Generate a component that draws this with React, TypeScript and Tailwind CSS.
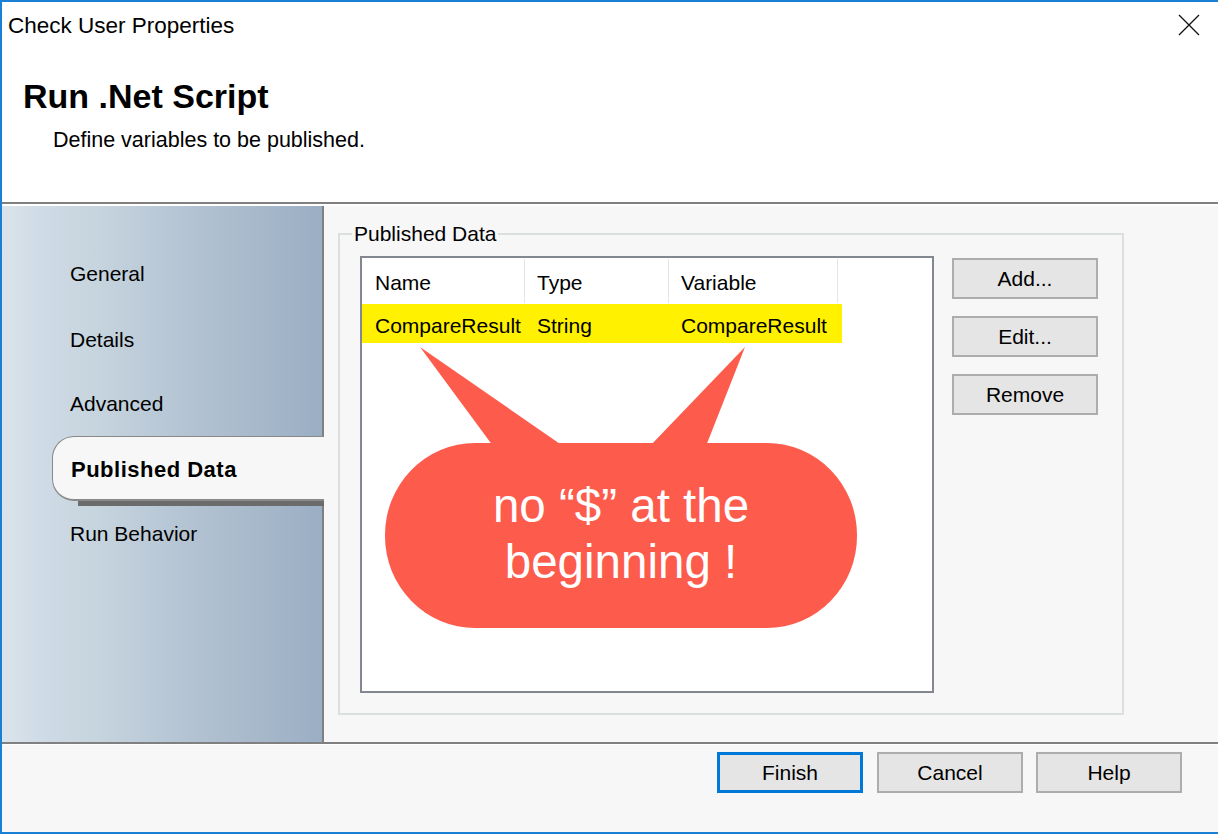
import React from "react";

function WinButton({ label, primary }: { label: string; primary?: boolean }) {
  return (
    <div
      className={
        "w-[146px] h-[41px] flex items-center justify-center bg-[#e5e5e5] text-[21px] text-black " +
        (primary ? "border-[3px] border-[#0078d7]" : "border-2 border-[#adadad]")
      }
    >
      {label}
    </div>
  );
}

export default function App() {
  return (
    <div className="relative w-[1218px] h-[834px] overflow-hidden bg-white flex flex-col border-t-2 border-l-2 border-b-2 border-[#1a80d6] text-black font-['Liberation_Sans','Arial',sans-serif]">
      {/* Title bar */}
      <div className="h-[46px] shrink-0 flex items-center justify-between pl-[6px] pr-[18px]">
        <span className="text-[22.5px] leading-[28px] pt-[2px]">Check User Properties</span>
        <svg width="22" height="22" viewBox="0 0 22 22">
          <path d="M1 1 L21 21 M21 1 L1 21" stroke="#111" strokeWidth="1.3" fill="none" />
        </svg>
      </div>

      {/* Header */}
      <div className="h-[154px] shrink-0 flex flex-col pt-[28px]">
        <div className="pl-[21px] text-[34px] leading-[40px] font-bold">Run .Net Script</div>
        <div className="pl-[51px] mt-[11px] text-[21.5px] leading-[26px]">Define variables to be published.</div>
      </div>
      <div className="h-[2px] shrink-0 bg-[#808080]" />
      <div className="h-[2px] shrink-0 bg-white" />

      {/* Main */}
      <div className="h-[536px] shrink-0 flex">
        {/* Sidebar */}
        <div className="w-[322px] shrink-0 flex flex-col bg-[linear-gradient(to_right,#dae4eb_0%,#cfdbe6_12%,#c6d4de_30%,#bccbd8_45%,#b2c2d2_60%,#a8b9cb_78%,#9aaec4_100%)] text-[21px]">
          <div className="h-[230px] shrink-0 border-r-2 border-[#7f7f7f] flex flex-col pt-[56px] pl-[68px]">
            <div className="leading-[24px]">General</div>
            <div className="leading-[24px] mt-[42px]">Details</div>
            <div className="leading-[24px] mt-[40px]">Advanced</div>
          </div>
          <div className="h-[70px] shrink-0 flex flex-col pl-[50px]">
            <div className="h-[65px] rounded-l-[22px] border-l border-t border-b-2 border-[#8a8a8a] bg-[#f7f7f7] flex items-center pl-[18px] pt-[3px] font-bold text-[22px] tracking-[0.5px]">
              Published Data
            </div>
            <div className="h-[5px] ml-[26px] bg-[#6b6b6b]" />
          </div>
          <div className="flex-1 border-r-2 border-[#7f7f7f] pt-[16px] pl-[68px]">
            <div className="leading-[24px]">Run Behavior</div>
          </div>
        </div>

        {/* Content */}
        <div className="flex-1 bg-[#f7f7f7]">
          <fieldset className="ml-[14px] mt-[16px] w-[786px] h-[493px] border-2 border-[#dcdfe0] pl-[20px] pt-[10px]">
            <legend className="ml-[-8px] px-[2px] text-[21px] leading-[24px]">Published Data</legend>
            <div className="flex">
              <div className="w-[574px] h-[437px] border-2 border-[#828790] bg-white flex flex-col text-[21px]">
                <div className="h-[46px] flex">
                  <div className="w-[163px] flex items-center pl-[13px] pt-[4px] border-r border-[#e5e5e5] my-[1px]">Name</div>
                  <div className="w-[144px] flex items-center pl-[12px] pt-[4px] border-r border-[#e5e5e5] my-[1px]">Type</div>
                  <div className="w-[169px] flex items-center pl-[12px] pt-[4px] border-r border-[#e5e5e5] my-[1px]">Variable</div>
                </div>
                <div className="h-[39px] w-[480px] flex bg-[#fff100]">
                  <div className="w-[163px] flex items-center pl-[13px] pt-[4px]">CompareResult</div>
                  <div className="w-[144px] flex items-center pl-[12px] pt-[4px]">String</div>
                  <div className="flex-1 flex items-center pl-[12px] pt-[4px]">CompareResult</div>
                </div>
              </div>
              <div className="ml-[18px] mt-[2px] flex flex-col gap-[17px]">
                <WinButton label="Add..." />
                <WinButton label="Edit..." />
                <WinButton label="Remove" />
              </div>
            </div>
          </fieldset>
        </div>
      </div>

      {/* Footer */}
      <div className="h-[2px] shrink-0 bg-[#808080]" />
      <div className="h-[1px] shrink-0 bg-white" />
      <div className="flex-1 bg-[#f7f7f7] flex justify-end items-start pt-[7px] pr-[36px]">
        <WinButton label="Finish" primary />
        <div className="ml-[14px]">
          <WinButton label="Cancel" />
        </div>
        <div className="ml-[13px]">
          <WinButton label="Help" />
        </div>
      </div>

      {/* Callout bubble overlay */}
      <svg
        className="absolute left-[-2px] top-[-2px] pointer-events-none"
        width="1218"
        height="834"
        viewBox="0 0 1218 834"
      >
        <polygon points="420,347 493,446 563,446" fill="#fd5b4c" />
        <polygon points="745,347 650,446 706,446" fill="#fd5b4c" />
        <rect x="385" y="443" width="472" height="185" rx="90" ry="92" fill="#fd5b4c" />
      </svg>
      <div className="absolute left-[383px] top-[476px] w-[472px] text-center text-white text-[47.5px] leading-[56px] pointer-events-none">
        <div>no “$” at the</div>
        <div>beginning !</div>
      </div>
    </div>
  );
}
